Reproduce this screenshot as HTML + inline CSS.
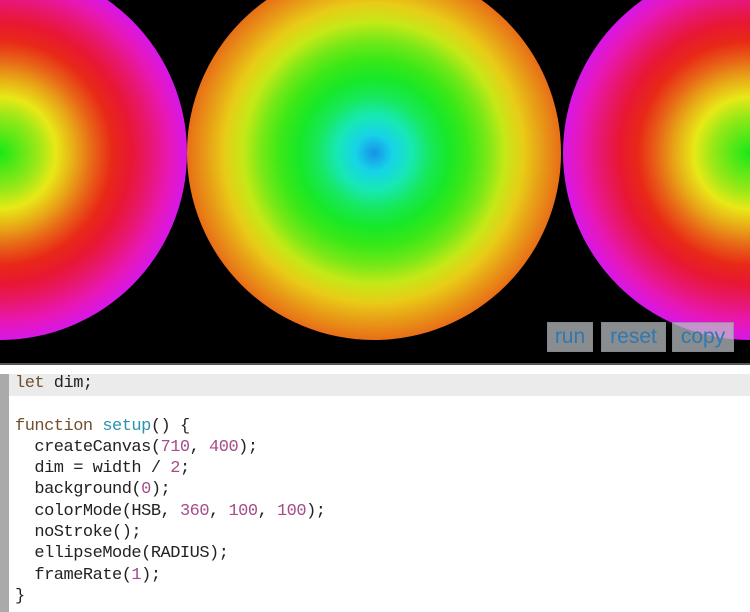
<!DOCTYPE html>
<html><head><style>
body{margin:0;width:750px;height:612px;overflow:hidden;background:#fff;position:relative;font-family:"Liberation Sans",sans-serif}
#cv{position:absolute;left:0;top:0;width:750px;height:363px;background:#000;overflow:hidden;border-bottom:2px solid #555}
.c{position:absolute;width:374px;height:374px;border-radius:50%;top:-34px}
.mid{left:187px;background:radial-gradient(circle closest-side,hsl(205,82%,50%) 0%,hsl(186,82%,50%) 10%,hsl(165,82%,50%) 20%,hsl(140,82%,50%) 30%,hsl(125,82%,50%) 40%,hsl(110,82%,50%) 50%,hsl(93,82%,50%) 60%,hsl(70,82%,50%) 70%,hsl(52,82%,50%) 80%,hsl(38,82%,50%) 90%,hsl(25,82%,50%) 100%)}
.side{background:radial-gradient(circle closest-side,hsl(120,82%,50%) 0%,hsl(101,82%,50%) 10%,hsl(83,82%,50%) 20%,hsl(60,82%,50%) 30%,hsl(42,82%,50%) 40%,hsl(22,82%,50%) 50%,hsl(5,82%,50%) 60%,hsl(352,82%,50%) 70%,hsl(335,82%,50%) 80%,hsl(315,82%,50%) 90%,hsl(295,82%,50%) 100%)}
.l{left:-187px}.r{left:563px}
.btn{position:absolute;top:322px;height:28px;background:rgba(190,195,200,.72);border:1px solid rgba(120,130,140,.6);color:#2f78b0;font-size:21px;line-height:28px;text-align:center}
#bar{position:absolute;left:0;top:374px;width:9px;height:238px;background:#aaa}
.hl{position:absolute;left:9px;top:374px;width:741px;height:22px;background:#ebebeb}
pre{position:absolute;left:15px;top:373px;margin:0;font-family:"Liberation Mono",monospace;font-size:17px;line-height:21.3px;letter-spacing:-.5px;color:#222}
.k{color:#704f2e}.f{color:#2a93ad}.n{color:#a54d8a}
</style></head><body>
<div id="cv">
<div class="c side l"></div><div class="c mid"></div><div class="c side r"></div>
</div>
<div class="btn" style="left:547px;width:44px">run</div>
<div class="btn" style="left:601px;width:63px">reset</div>
<div class="btn" style="left:672px;width:60px">copy</div>
<div class="hl"></div>
<div id="bar"></div>
<pre><span class="k">let</span> dim;

<span class="k">function</span> <span class="f">setup</span>() {
  createCanvas(<span class="n">710</span>, <span class="n">400</span>);
  dim = width / <span class="n">2</span>;
  background(<span class="n">0</span>);
  colorMode(HSB, <span class="n">360</span>, <span class="n">100</span>, <span class="n">100</span>);
  noStroke();
  ellipseMode(RADIUS);
  frameRate(<span class="n">1</span>);
}</pre>
</body></html>
